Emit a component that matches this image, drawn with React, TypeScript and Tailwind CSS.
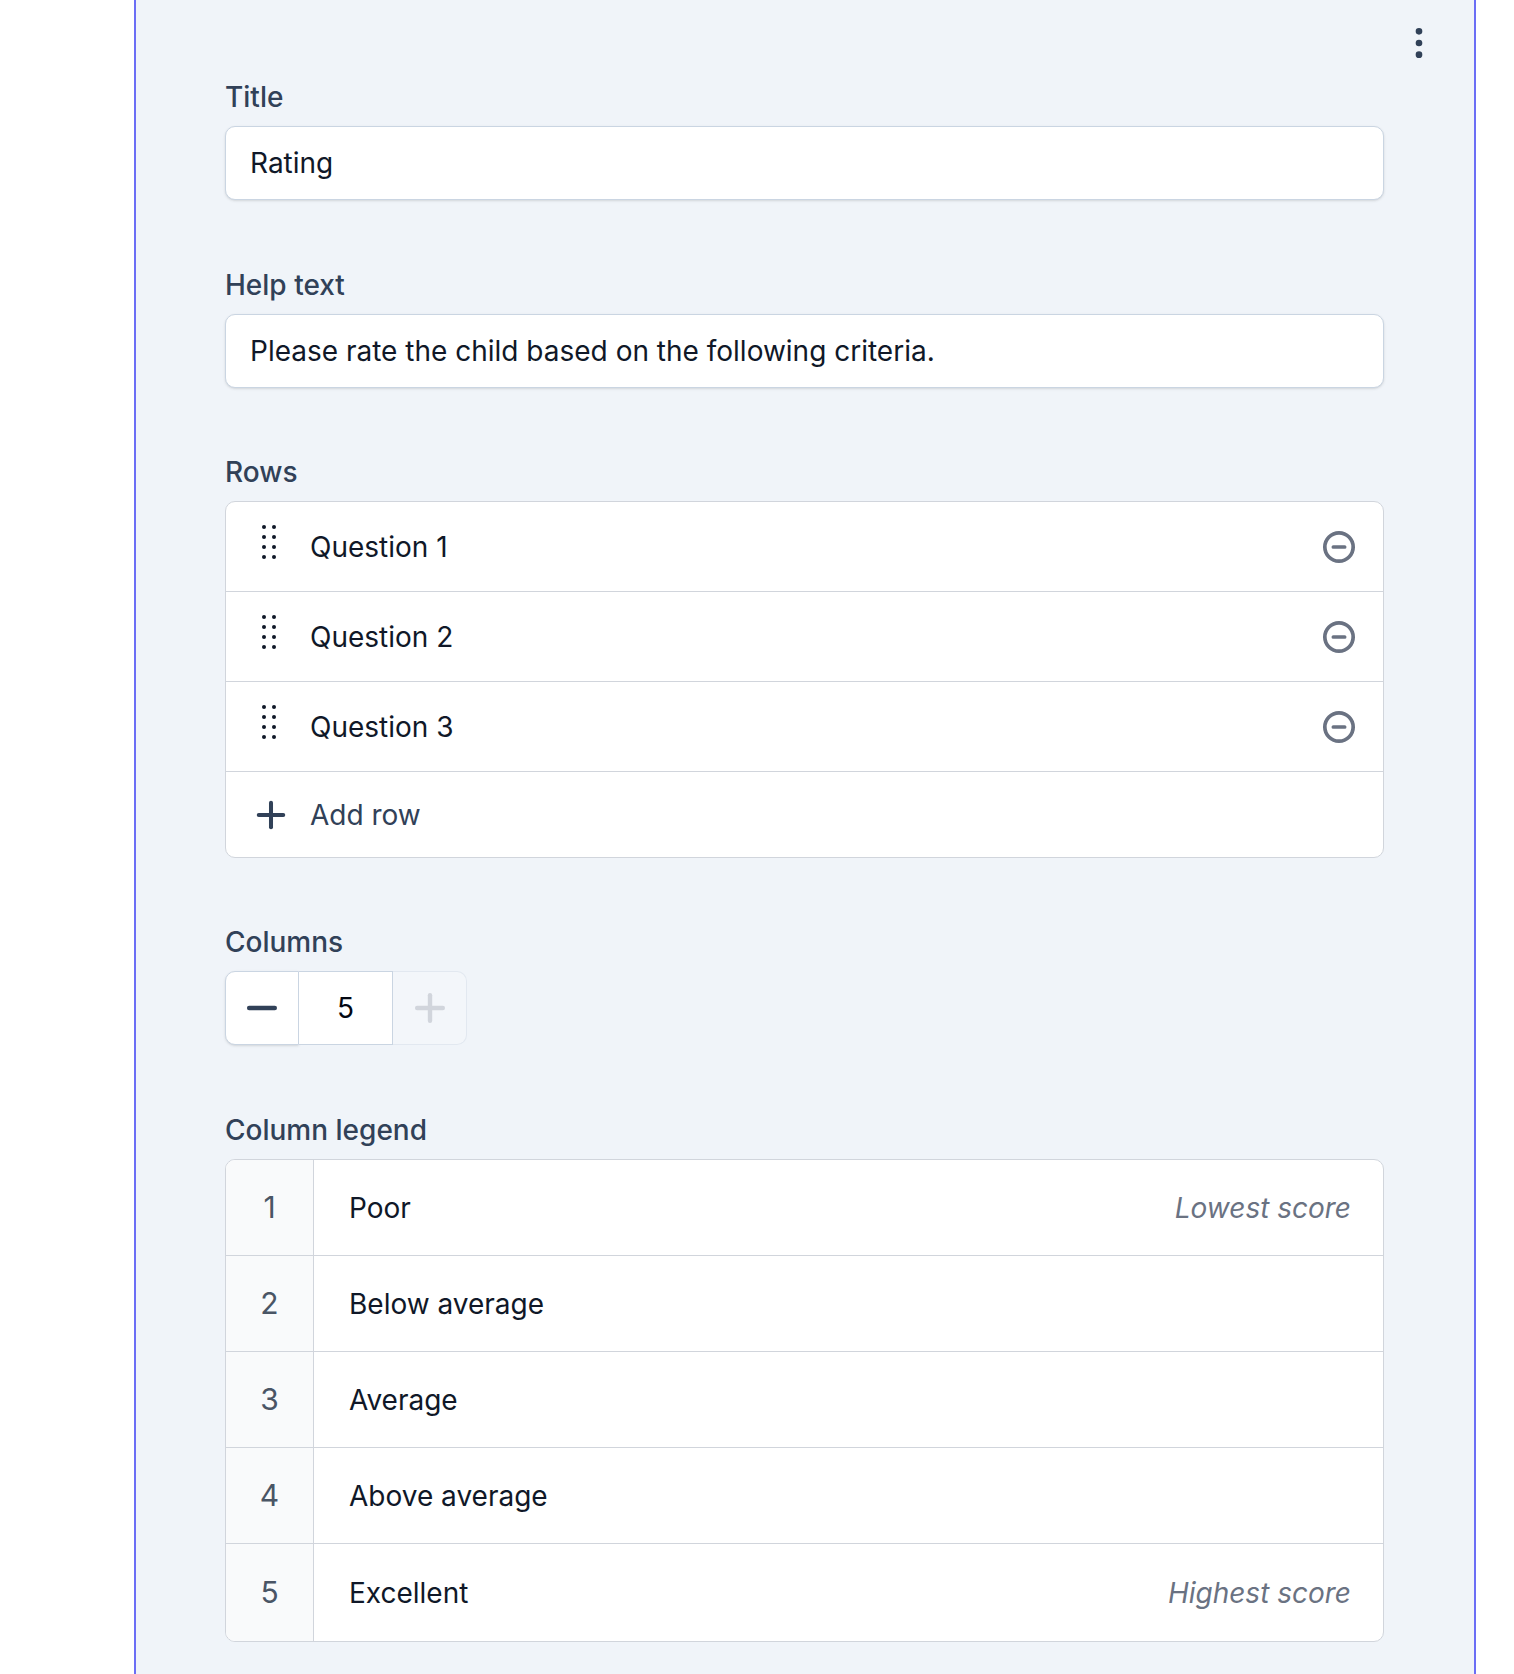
import { CircleMinus, EllipsisVertical, Minus, Plus } from 'lucide-react'

const rows = ['Question 1', 'Question 2', 'Question 3']

const legend = [
  { n: 1, label: 'Poor', hint: 'Lowest score' },
  { n: 2, label: 'Below average' },
  { n: 3, label: 'Average' },
  { n: 4, label: 'Above average' },
  { n: 5, label: 'Excellent', hint: 'Highest score' },
]

function Label({ children }: { children: React.ReactNode }) {
  return <div className="mb-[9px] text-[28px] leading-[40px] font-medium text-slate-700">{children}</div>
}

function TextInput({ value }: { value: string }) {
  return (
    <input
      readOnly
      value={value}
      className="block h-[74px] w-full rounded-[10px] border border-slate-300 bg-white px-6 text-[28px] text-gray-900 shadow-sm outline-none"
    />
  )
}

function DragHandle() {
  return (
    <svg width="14" height="34" viewBox="0 0 14 34" className="text-gray-900" fill="currentColor">
      {[2, 12, 22, 32].map((y) => (
        <g key={y}>
          <circle cx="2" cy={y} r="2" />
          <circle cx="12" cy={y} r="2" />
        </g>
      ))}
    </svg>
  )
}

export default function App() {
  return (
    <div className="min-h-screen bg-white font-['Inter','Noto_Sans',sans-serif]">
      <div className="relative ml-[134px] mr-[38px] min-h-screen border-x-2 border-[#6b6ef5] bg-[#f0f4f9] pt-[77px] pr-[90px] pb-[80px] pl-[89px]">
        <button className="absolute top-[23px] right-[35px] text-slate-700">
          <EllipsisVertical size={40} strokeWidth={2} />
        </button>

        <section>
          <Label>Title</Label>
          <TextInput value="Rating" />
        </section>

        <section className="mt-[65px]">
          <Label>Help text</Label>
          <TextInput value="Please rate the child based on the following criteria." />
        </section>

        <section className="mt-[64px]">
          <Label>Rows</Label>
          <div className="overflow-hidden rounded-[10px] border border-gray-300 bg-white">
            {rows.map((q) => (
              <div key={q} className="flex h-[90px] items-center border-b border-gray-300 pr-[27px] pl-[36px]">
                <div className="-mt-[10px] w-[48px]">
                  <DragHandle />
                </div>
                <div className="flex-1 text-[28px] text-gray-900">{q}</div>
                <CircleMinus size={34} strokeWidth={2.6} className="text-gray-500" />
              </div>
            ))}
            <div className="flex h-[85px] items-center pl-[24px] text-slate-700">
              <Plus size={42} strokeWidth={2.3} className="mr-[18px]" />
              <span className="text-[28px]">Add row</span>
            </div>
          </div>
        </section>

        <section className="mt-[64px]">
          <Label>Columns</Label>
          <div className="flex h-[74px]">
            <button className="flex w-[74px] items-center justify-center rounded-l-[10px] border border-slate-300 bg-white text-slate-700 shadow-sm">
              <Minus size={44} strokeWidth={2.4} />
            </button>
            <div className="flex w-[94px] items-center justify-center border-y border-r border-slate-300 bg-white text-[28px] text-gray-950">
              5
            </div>
            <button className="flex w-[74px] items-center justify-center rounded-r-[10px] border-y border-r border-slate-200 bg-[#f3f6fa] text-gray-300">
              <Plus size={44} strokeWidth={2.4} />
            </button>
          </div>
        </section>

        <section className="mt-[65px]">
          <Label>Column legend</Label>
          <div className="overflow-hidden rounded-[10px] border border-gray-300 bg-white">
            {legend.map((l, i) => (
              <div
                key={l.n}
                className={`flex ${i === 0 ? 'h-[95px]' : i === 4 ? 'h-[98px] border-t border-gray-300' : 'h-[96px] border-t border-gray-300'}`}
              >
                <div className="flex w-[88px] items-center justify-center border-r border-gray-300 bg-gray-50 text-[30px] text-gray-600">
                  {l.n}
                </div>
                <div className="flex flex-1 items-center justify-between pr-[32px] pl-[35px] text-[28px]">
                  <span className="text-gray-900">{l.label}</span>
                  {l.hint && <span className="italic text-gray-500">{l.hint}</span>}
                </div>
              </div>
            ))}
          </div>
        </section>
      </div>
    </div>
  )
}
